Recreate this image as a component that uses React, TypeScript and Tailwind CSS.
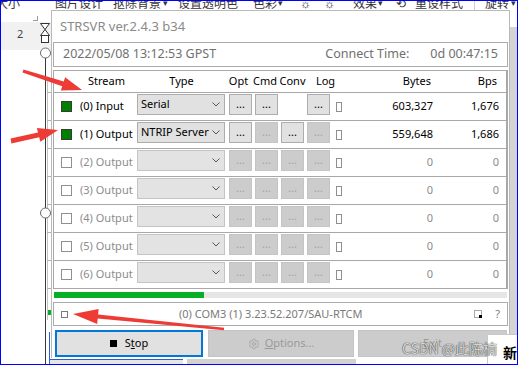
import React from "react";
import { Settings } from "lucide-react";

type S = "e" | "d" | "n";
type Row = {
  label: string;
  on: boolean;
  type: string;
  typeEn: boolean;
  opt: S;
  cmd: S;
  conv: S;
  log: S;
  bytes: string;
  bps: string;
};

const rows: Row[] = [
  { label: "(0) Input", on: true, type: "Serial", typeEn: true, opt: "e", cmd: "e", conv: "n", log: "e", bytes: "603,327", bps: "1,676" },
  { label: "(1) Output", on: true, type: "NTRIP Server", typeEn: true, opt: "e", cmd: "d", conv: "e", log: "d", bytes: "559,648", bps: "1,686" },
  { label: "(2) Output", on: false, type: "", typeEn: false, opt: "d", cmd: "d", conv: "d", log: "d", bytes: "0", bps: "0" },
  { label: "(3) Output", on: false, type: "", typeEn: false, opt: "d", cmd: "d", conv: "d", log: "d", bytes: "0", bps: "0" },
  { label: "(4) Output", on: false, type: "", typeEn: false, opt: "d", cmd: "d", conv: "d", log: "d", bytes: "0", bps: "0" },
  { label: "(5) Output", on: false, type: "", typeEn: false, opt: "d", cmd: "d", conv: "d", log: "d", bytes: "0", bps: "0" },
  { label: "(6) Output", on: false, type: "", typeEn: false, opt: "d", cmd: "d", conv: "d", log: "d", bytes: "0", bps: "0" },
];

function Btn({ s, first }: { s: S; first?: boolean }) {
  const ml = first ? "ml-[4px]" : "ml-[3px]";
  if (s === "n") return <div className={`${ml} w-[23px] h-[21px] mb-[4px] shrink-0`} />;
  if (s === "e")
    return (
      <div className={`${ml} w-[23px] h-[21px] mb-[4px] shrink-0 flex items-end justify-center pb-[5px] border border-[#adadad] bg-[#e1e1e1] text-black text-[11px] leading-none`}>
        ...
      </div>
    );
  return (
    <div className={`${ml} w-[23px] h-[21px] mb-[4px] shrink-0 flex items-end justify-center pb-[5px] border border-[#c4c4c4] bg-[#cccccc] text-[#a3a3a3] text-[11px] leading-none`}>
      ...
    </div>
  );
}

function Chevron() {
  return (
    <svg width="8" height="5" viewBox="0 0 8 5" className="shrink-0">
      <polyline points="0.5,0.5 4,4 7.5,0.5" fill="none" stroke="#555" strokeWidth="1" />
    </svg>
  );
}

function TableRow({ r }: { r: Row }) {
  return (
    <div className="h-[28px] border-t border-[#a8a8a8] flex items-center">
      <div className="w-[83px] shrink-0 flex items-center">
        {r.on ? (
          <div className="ml-[7px] w-[11px] h-[11px] border border-[#3a3a3a] bg-[#008000]" />
        ) : (
          <div className="ml-[7px] w-[11px] h-[11px] border border-[#8f8f8f] bg-white" />
        )}
        <span className={r.on ? "ml-[8px] text-[11px] text-black whitespace-nowrap" : "ml-[8px] text-[11px] text-[#8c8c8c] whitespace-nowrap"}>
          {r.label}
        </span>
      </div>
      <div
        className={
          r.typeEn
            ? "w-[88px] h-[21px] mb-[4px] shrink-0 border border-[#adadad] bg-[#e1e1e1] flex items-center pl-[3px] pr-[4px] text-[11px] text-black"
            : "w-[88px] h-[21px] mb-[4px] shrink-0 border border-[#c4c4c4] bg-[#e3e3e3] flex items-center pl-[3px] pr-[4px] text-[11px] text-black"
        }
      >
        <span className="flex-1 whitespace-nowrap">{r.type}</span>
        <Chevron />
      </div>
      <Btn s={r.opt} first />
      <Btn s={r.cmd} />
      <Btn s={r.conv} />
      <Btn s={r.log} />
      <div className="ml-[6px] w-[6px] h-[10px] border border-[#8f8f8f] shrink-0" />
      <div className={r.on ? "w-[91px] shrink-0 text-right text-[11px] text-black" : "w-[91px] shrink-0 text-right text-[11px] text-[#8c8c8c]"}>
        {r.bytes}
      </div>
      <div className={r.on ? "w-[66px] shrink-0 text-right text-[11px] text-black" : "w-[66px] shrink-0 text-right text-[11px] text-[#8c8c8c]"}>
        {r.bps}
      </div>
    </div>
  );
}

function Toolbar() {
  return (
    <div className="h-[9px] overflow-hidden">
      <div className="-mt-[6px] flex items-start text-[12px] leading-[16px] text-[#333] whitespace-nowrap font-['Noto_Sans_CJK_SC',sans-serif]">
        <span className="-ml-[5px] w-[24px] shrink-0">大小</span>
        <span className="ml-[35px] w-[48px] shrink-0">图片设计</span>
        <span className="ml-[10px] w-[48px] shrink-0">抠除背景</span>
        <span className="ml-[2px] w-[6px] shrink-0 text-[9px]">▾</span>
        <span className="ml-[9px] w-[60px] shrink-0">设置透明色</span>
        <span className="ml-[15px] w-[24px] shrink-0">色彩</span>
        <span className="ml-[1px] w-[6px] shrink-0 text-[9px]">▾</span>
        <span className="ml-[16px] w-[12px] shrink-0">☼</span>
        <span className="ml-[12px] w-[12px] shrink-0">☼</span>
        <span className="ml-[17px] w-[24px] shrink-0">效果</span>
        <span className="ml-[1px] w-[6px] shrink-0 text-[9px]">▾</span>
        <span className="ml-[12px] w-[12px] shrink-0">⟲</span>
        <span className="ml-[7px] w-[48px] shrink-0">重设样式</span>
        <span className="ml-[11px] w-[1px] h-[16px] bg-[#d0d0d0] shrink-0" />
        <span className="ml-[10px] w-[24px] shrink-0">旋转</span>
        <span className="ml-[2px] w-[6px] shrink-0 text-[9px]">▾</span>
      </div>
    </div>
  );
}

function Gutter() {
  const ticks = [82, 110, 138, 166, 194, 222, 250, 278];
  return (
    <div className="relative w-[50px] shrink-0">
      <div className="absolute left-0 top-[12px] w-[50px] h-[28px] bg-[#f1f1f1]" />
      <div className="absolute left-[32px] top-[6px] w-[5px] h-[5px] border-r border-b border-[#9a9a9a]" />
      <div className="absolute left-[16px] top-[17px] text-[11px] leading-[14px] text-[#444]">2</div>
      <svg className="absolute left-[37px] top-[13px]" width="14" height="24" viewBox="0 0 14 24">
        <polygon points="2.5,0.5 11.5,0.5 7,6.5 11.5,12.5 2.5,12.5 7,6.5" fill="#fff" stroke="#333" strokeWidth="1" />
        <rect x="3.5" y="12.5" width="7" height="7" fill="#fff" stroke="#333" strokeWidth="1" />
      </svg>
      <div className="absolute left-[44px] top-[48px] w-[1px] h-[310px] bg-[#3a3a3a]" />
      <div className="absolute left-[46px] top-[70px] w-[1px] h-[240px] bg-[#c4c4c4]" />
      {ticks.map((t) => (
        <div key={t} className="absolute left-[46px] w-[4px] h-[1px] bg-[#b0b0b0]" style={{ top: t }} />
      ))}
      <svg className="absolute left-[38px] top-[36px]" width="14" height="14" viewBox="0 0 14 14">
        <circle cx="6.5" cy="7" r="5" fill="#fff" stroke="#6a6a6a" strokeWidth="1" />
      </svg>
      <svg className="absolute left-[38px] top-[196px]" width="14" height="14" viewBox="0 0 14 14">
        <circle cx="6.5" cy="7" r="5" fill="#fff" stroke="#6a6a6a" strokeWidth="1" />
      </svg>
      <div className="absolute left-[47px] top-[300px] w-[3px] h-[5px] bg-[#06b025]" />
    </div>
  );
}

function StatusIcon() {
  return (
    <svg width="9" height="9" viewBox="0 0 9 9" className="shrink-0">
      <rect x="0.5" y="0.5" width="7" height="7" fill="none" stroke="#555" strokeWidth="1" strokeDasharray="1 1" />
      <rect x="5" y="5" width="3" height="3" fill="#000" />
    </svg>
  );
}

function Dialog() {
  return (
    <div className="w-[459px] h-[348px] shrink-0 border-l border-t border-r border-[#b9b9b9] bg-white flex flex-col">
      <div className="h-[31px] flex items-center pl-[8px] text-[13px] text-[#8a8a8a]">STRSVR ver.2.4.3 b34</div>
      <div className="ml-[1px] w-[455px] h-[25px] border border-[#ababab] flex items-center text-[12.5px] text-[#707070] whitespace-nowrap">
        <span className="pl-[9px]">2022/05/08 13:12:53 GPST</span>
        <span className="ml-auto">Connect Time:</span>
        <span className="ml-[21px] pr-[9px]">0d 00:47:15</span>
      </div>
      <div className="ml-[1px] mt-[3px] w-[455px] h-[219px] border-l border-t border-b border-r-2 border-[#a8a8a8] flex flex-col">
        <div className="h-[21px] flex items-center text-[11px] text-black whitespace-nowrap">
          <div className="w-[105px] shrink-0 flex justify-center">Stream</div>
          <div className="w-[45px] shrink-0 flex justify-center">Type</div>
          <div className="ml-[18px] w-[33px] shrink-0 flex justify-center">Opt</div>
          <div className="w-[20px] shrink-0 flex justify-center">Cmd</div>
          <div className="w-[35px] shrink-0 flex justify-center">Conv</div>
          <div className="w-[31px] shrink-0 flex justify-center">Log</div>
          <div className="w-[90px] shrink-0 text-right">Bytes</div>
          <div className="w-[66px] shrink-0 text-right">Bps</div>
        </div>
        {rows.map((r) => (
          <TableRow key={r.label} r={r} />
        ))}
      </div>
      <div className="ml-[2px] mt-[3px] w-[453px] h-[6px] bg-[#e6e6e6] flex">
        <div className="w-[150px] h-full bg-[#06b025]" />
      </div>
      <div className="ml-[1px] mt-[4px] w-[455px] h-[24px] border border-[#ababab] flex items-center">
        <div className="ml-[7px] w-[7px] h-[7px] border border-[#7a7a7a] shrink-0" />
        <span className="ml-[111px] text-[11px] text-[#7a7a7a] whitespace-nowrap">(0) COM3 (1) 3.23.52.207/SAU-RTCM</span>
        <div className="ml-auto">
          <StatusIcon />
        </div>
        <span className="ml-[12px] mr-[7px] text-[11px] text-[#7a7a7a]">?</span>
      </div>
      <div className="mt-[4px] flex h-[27px]">
        <div className="ml-[3px] w-[148px] h-[27px] border-2 border-[#0078d7] bg-[#e1e1e1] flex items-center justify-center text-[11px] text-black">
          <div className="w-[7px] h-[7px] bg-black" />
          <span className="ml-[8px]">
            S<span className="underline">t</span>op
          </span>
        </div>
        <div className="ml-[5px] w-[146px] h-[27px] border border-[#c4c4c4] bg-[#cccccc] flex items-center justify-center text-[11px] text-[#9a9a9a]">
          <Settings size={12} strokeWidth={2} color="#a8a8a8" />
          <span className="ml-[5px]">
            <span className="underline">O</span>ptions...
          </span>
        </div>
        <div className="ml-[4px] w-[149px] h-[27px] border border-[#c4c4c4] bg-[#cccccc] flex items-center justify-center text-[11px] text-[#9a9a9a]">
          <span>
            <span className="underline">E</span>xit
          </span>
        </div>
      </div>
    </div>
  );
}

function Overlays() {
  return (
    <>
      <div className="absolute left-[48px] top-[331px] w-[1px] h-[34px] bg-[#2b5fd9]" />
      <div className="absolute left-[49px] top-[358px] w-[133px] h-[7px] border-t border-[#2b5fd9] bg-[#e6e6e6]" />
      <div className="absolute left-[186px] top-[358px] w-[169px] h-[7px] bg-[#d2d2d2]" />
      <div className="absolute left-[486px] top-[333px] w-[32px] h-[32px] bg-white border-l border-t border-[#c8c8c8] overflow-hidden">
        <div className="ml-[15px] mt-[9px] text-[14px] leading-[16px] font-bold text-black whitespace-nowrap font-['Noto_Sans_CJK_SC',sans-serif]">新建</div>
      </div>
      <div className="absolute left-[401px] top-[338px] text-[14px] leading-[18px] text-[rgba(238,238,238,0.9)] whitespace-nowrap font-['Noto_Sans_CJK_SC',sans-serif] [text-shadow:0_0_1px_rgba(0,0,0,0.8),0_0_1px_rgba(0,0,0,0.5)]">
        CSDN @此陈楠
      </div>
      <svg className="absolute left-0 top-0" width="518" height="365" viewBox="0 0 518 365">
        <polygon fill="#ee3b36" points="22.46,68.57 62.77,80.52 64.14,76.24 81,89 59.86,89.56 61.24,85.28 21.54,71.43" />
        <polygon fill="#ee3b36" points="9.6,137.5 37.0,131.5 35.9,127.1 57,129 39.3,140.7 38.2,136.3 10.4,142.5" />
        <polygon fill="#ee3b36" points="223.1,326.8 97.1,313.5 97.6,308.0 72,313 96.2,323.0 96.7,317.5 222.9,329.2" />
      </svg>
    </>
  );
}

export default function App() {
  return (
    <div className="relative w-[518px] h-[365px] overflow-hidden bg-white border border-[#0000ff] font-['Noto_Sans',sans-serif] text-black">
      <Toolbar />
      <div className="flex h-[354px]">
        <Gutter />
        <Dialog />
        <div className="w-[7px] shrink-0 mt-[17px] h-[318px] bg-[#d4d4d4]" />
      </div>
      <Overlays />
    </div>
  );
}
